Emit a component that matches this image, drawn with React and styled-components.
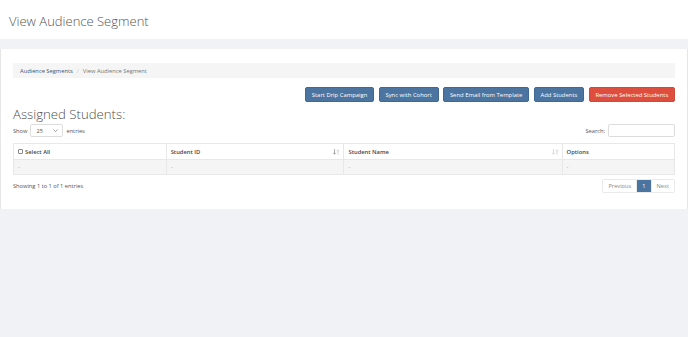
import React from 'react';
import styled, { createGlobalStyle } from 'styled-components';

const GlobalStyle = createGlobalStyle`
  html, body {
    margin: 0;
    padding: 0;
    background: #f1f2f6;
    font-family: "Open Sans", "Liberation Sans", sans-serif;
    color: #555;
  }
  * { box-sizing: border-box; }
`;

const Header = styled.div`
  height: 39px;
  background: #fff;
  display: flex;
  align-items: center;
  padding: 3px 0 0 9px;
`;

const PageTitle = styled.h1`
  margin: 0;
  font-size: 13px;
  font-weight: 300;
  color: #555;
`;

const Panel = styled.div`
  margin-top: 10px;
  background: #fff;
  border-left: 1px solid #e6e6e6;
  border-right: 1px solid #e6e6e6;
  padding: 14px 12px 16px 12px;
`;

const Breadcrumb = styled.div`
  background: #f5f5f5;
  height: 15px;
  display: flex;
  align-items: center;
  padding-left: 7px;
  font-size: 5.75px;
  gap: 4px;
  color: #777;
`;

const Crumb = styled.span`
  color: ${p => (p.$link ? '#35577a' : '#777')};
`;

const Sep = styled.span`
  color: #ccc;
`;

const Actions = styled.div`
  display: flex;
  justify-content: flex-end;
  gap: 4.5px;
  margin-top: 9px;
`;

const Button = styled.button`
  height: 15px;
  padding: 0 5.8px;
  border: 1px solid ${p => (p.$danger ? '#d04a39' : '#41688f')};
  background: ${p => (p.$danger ? '#dd4e3e' : '#4b74a0')};
  color: #fff;
  border-radius: 2px;
  font-family: inherit;
  font-size: 5.9px;
  cursor: pointer;
`;

const SectionTitle = styled.h2`
  margin: 3px 0 0 0;
  font-size: 13.2px;
  font-weight: 300;
  color: #4f4f4f;
  line-height: 18px;
`;

const Controls = styled.div`
  display: flex;
  justify-content: space-between;
  align-items: center;
  margin-top: 1px;
  font-size: 5.7px;
  color: #555;
`;

const Inline = styled.label`
  display: flex;
  align-items: center;
  gap: 3px;
`;

const Select = styled.div`
  width: 33px;
  height: 13px;
  border: 1px solid #ddd;
  border-radius: 2px;
  display: flex;
  align-items: center;
  justify-content: space-between;
  padding: 0 4px 0 5px;
  font-size: 5.6px;
`;

const SearchInput = styled.div`
  width: 67px;
  height: 13px;
  border: 1px solid #ddd;
  border-radius: 2px;
`;

const Table = styled.table`
  width: 100%;
  margin-top: 6px;
  border-collapse: collapse;
  font-size: 5.8px;
  table-layout: fixed;
`;

const Th = styled.th`
  height: 16px;
  border: 1px solid #e8e8e8;
  text-align: left;
  padding: 0 4px;
  font-weight: 600;
  color: #444;
  position: relative;
`;

const Td = styled.td`
  height: 15px;
  border: 1px solid #e8e8e8;
  background: #f5f5f5;
  padding: 0 4px;
  color: #999;
`;

const SortIcon = styled.span`
  position: absolute;
  right: 3px;
  top: 5px;
  display: flex;
`;

const Check = styled.span`
  display: inline-block;
  width: 5px;
  height: 5px;
  border: 1px solid #888;
  border-radius: 1px;
  margin-right: 2px;
  vertical-align: -0.5px;
`;

const Footer = styled.div`
  display: flex;
  justify-content: space-between;
  align-items: center;
  margin-top: 4px;
  font-size: 5.7px;
  color: #555;
`;

const Pager = styled.div`
  display: flex;
  border: 1px solid #eaeaea;
  border-radius: 2px;
  height: 14px;
`;

const PageItem = styled.span`
  display: flex;
  align-items: center;
  padding: 0 5px;
  color: ${p => (p.$active ? '#fff' : '#888')};
  background: ${p => (p.$active ? '#4b74a0' : '#fff')};
  border-left: ${p => (p.$first ? 'none' : '1px solid #eaeaea')};
`;

function SortArrows({ active }) {
  const down = active ? '#888' : '#ccc';
  return (
    <SortIcon>
      <svg width="7" height="6" viewBox="0 0 14 12">
        <path d="M3 0v10M0.5 7.5L3 10.5 5.5 7.5" fill="none" stroke={down} strokeWidth="1.4" />
        <path d="M10 12V2M7.5 4.5L10 1.5 12.5 4.5" fill="none" stroke="#ccc" strokeWidth="1.4" />
      </svg>
    </SortIcon>
  );
}

const cols = ['23.1%', '26.9%', '33%', '17%'];

export default function App() {
  return (
    <>
      <GlobalStyle />
      <Header>
        <PageTitle>View Audience Segment</PageTitle>
      </Header>
      <Panel>
        <Breadcrumb>
          <Crumb $link>Audience Segments</Crumb>
          <Sep>/</Sep>
          <Crumb>View Audience Segment</Crumb>
        </Breadcrumb>
        <Actions>
          <Button>Start Drip Campaign</Button>
          <Button>Sync with Cohort</Button>
          <Button>Send Email from Template</Button>
          <Button>Add Students</Button>
          <Button $danger>Remove Selected Students</Button>
        </Actions>
        <SectionTitle>Assigned Students:</SectionTitle>
        <Controls>
          <Inline>
            Show
            <Select>
              <span>25</span>
              <svg width="5" height="3" viewBox="0 0 10 6">
                <path d="M1 1l4 4 4-4" fill="none" stroke="#666" strokeWidth="1.2" />
              </svg>
            </Select>
            entries
          </Inline>
          <Inline>
            Search:
            <SearchInput />
          </Inline>
        </Controls>
        <Table>
          <colgroup>
            {cols.map(w => (
              <col key={w} style={{ width: w }} />
            ))}
          </colgroup>
          <thead>
            <tr>
              <Th><Check />Select All</Th>
              <Th>Student ID<SortArrows active /></Th>
              <Th>Student Name<SortArrows /></Th>
              <Th>Options</Th>
            </tr>
          </thead>
          <tbody>
            <tr>
              <Td>-</Td>
              <Td>-</Td>
              <Td>-</Td>
              <Td>-</Td>
            </tr>
          </tbody>
        </Table>
        <Footer>
          <span>Showing 1 to 1 of 1 entries</span>
          <Pager>
            <PageItem $first>Previous</PageItem>
            <PageItem $active>1</PageItem>
            <PageItem>Next</PageItem>
          </Pager>
        </Footer>
      </Panel>
    </>
  );
}
